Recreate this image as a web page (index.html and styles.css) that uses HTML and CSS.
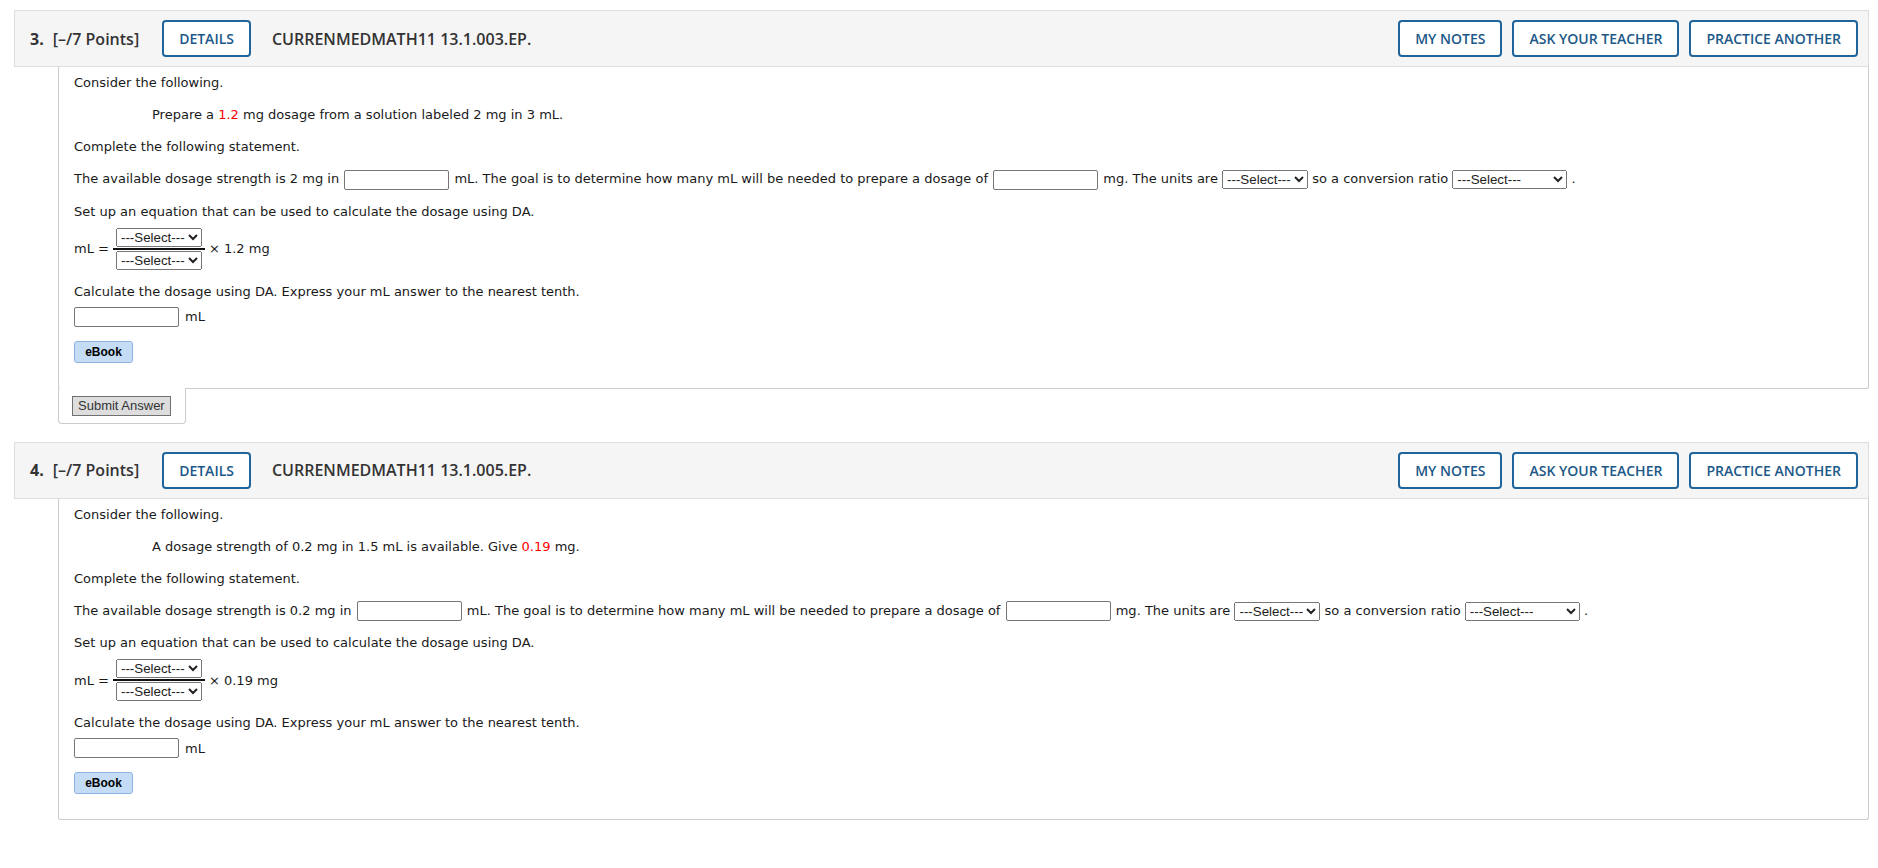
FILE: index.html
```html
<html>
    <head>
        <link rel="stylesheet" href="styles.css">
    </head>
    <body>

    <div class="page">

        <div class="question">
            <div class="q-head">
                <span class="q-num">3.</span>
                <span class="q-points">[&ndash;/7 Points]</span>
                <button class="head-btn details">Details</button>
                <span class="q-title">CURRENMEDMATH11 13.1.003.EP.</span>
                <div class="head-actions">
                    <button class="head-btn">My Notes</button>
                    <button class="head-btn">Ask Your Teacher</button>
                    <button class="head-btn">Practice Another</button>
                </div>
            </div>
            <div class="q-body">
                <p>Consider the following.</p>
                <p class="given">Prepare a <span class="red">1.2</span> mg dosage from a solution labeled 2 mg in 3 mL.</p>
                <p>Complete the following statement.</p>
                <p>The available dosage strength is 2 mg in <input type="text" class="answer"> mL. The goal is to determine how many mL will be needed to prepare a dosage of <input type="text" class="answer"> mg. The units are <select><option>---Select---</option><option>same</option><option>different</option></select> so a conversion ratio <select class="wide"><option>---Select---</option><option>is needed</option><option>is not needed</option></select> .</p>
                <p>Set up an equation that can be used to calculate the dosage using DA.</p>
                <div class="equation">
                    <span>mL =</span>
                    <span class="fraction">
                        <select><option>---Select---</option><option>1.2 mg</option><option>2 mg</option><option>3 mL</option></select>
                        <span class="bar"></span>
                        <select><option>---Select---</option><option>1.2 mg</option><option>2 mg</option><option>3 mL</option></select>
                    </span>
                    <span>&times; 1.2 mg</span>
                </div>
                <p class="calc">Calculate the dosage using DA. Express your mL answer to the nearest tenth.</p>
                <div class="result"><input type="text" class="answer"> mL</div>
                <button class="ebook">eBook</button>
            </div>
            <div class="submit-tab">
                <button class="submit-btn">Submit Answer</button>
            </div>
        </div>

        <div class="question">
            <div class="q-head">
                <span class="q-num">4.</span>
                <span class="q-points">[&ndash;/7 Points]</span>
                <button class="head-btn details">Details</button>
                <span class="q-title">CURRENMEDMATH11 13.1.005.EP.</span>
                <div class="head-actions">
                    <button class="head-btn">My Notes</button>
                    <button class="head-btn">Ask Your Teacher</button>
                    <button class="head-btn">Practice Another</button>
                </div>
            </div>
            <div class="q-body">
                <p>Consider the following.</p>
                <p class="given">A dosage strength of 0.2 mg in 1.5 mL is available. Give <span class="red">0.19</span> mg.</p>
                <p>Complete the following statement.</p>
                <p>The available dosage strength is 0.2 mg in <input type="text" class="answer"> mL. The goal is to determine how many mL will be needed to prepare a dosage of <input type="text" class="answer"> mg. The units are <select><option>---Select---</option><option>same</option><option>different</option></select> so a conversion ratio <select class="wide"><option>---Select---</option><option>is needed</option><option>is not needed</option></select> .</p>
                <p>Set up an equation that can be used to calculate the dosage using DA.</p>
                <div class="equation">
                    <span>mL =</span>
                    <span class="fraction">
                        <select><option>---Select---</option><option>0.19 mg</option><option>0.2 mg</option><option>1.5 mL</option></select>
                        <span class="bar"></span>
                        <select><option>---Select---</option><option>0.19 mg</option><option>0.2 mg</option><option>1.5 mL</option></select>
                    </span>
                    <span>&times; 0.19 mg</span>
                </div>
                <p class="calc">Calculate the dosage using DA. Express your mL answer to the nearest tenth.</p>
                <div class="result"><input type="text" class="answer"> mL</div>
                <button class="ebook">eBook</button>
            </div>
        </div>

    </div>

    </body>
</html>
```

FILE: styles.css
```css
body {
    margin: 0;
    background-color: white;
    color: #1a1a1a;
    font-family: "DejaVu Sans", Verdana, sans-serif;
    font-size: 13px;
}

.page {
    padding: 10px 9px 0 14px;
}

.question {
    margin-bottom: 18px;
}

/* header bar */
.q-head {
    display: flex;
    align-items: center;
    height: 57px;
    box-sizing: border-box;
    padding: 0 10px 0 15px;
    background-color: #f5f5f5;
    border: 1px solid #dddddd;
    font-family: "Open Sans", sans-serif;
    color: #333333;
}
.q-num {
    font-size: 16px;
    font-weight: 700;
    margin-right: 9px;
}
.q-points {
    font-size: 16px;
    font-weight: 600;
    margin-right: 23px;
}
.q-title {
    font-size: 16px;
    font-weight: 600;
    margin-left: 21px;
}
.head-actions {
    margin-left: auto;
    display: flex;
    gap: 10px;
}
.head-btn {
    height: 37px;
    padding: 0 15px;
    border: 2px solid #1f659c;
    border-radius: 4px;
    background-color: white;
    color: #1c5888;
    font-family: "Open Sans", sans-serif;
    font-size: 14px;
    font-weight: 600;
    text-transform: uppercase;
}

/* question body */
.q-body {
    margin-left: 44px;
    padding: 8px 15px 25px 15px;
    border: 1px solid #cccccc;
    border-top: none;
    border-radius: 0 0 3px 3px;
}
.q-body p {
    margin: 0 0 16px 0;
    line-height: 16px;
}
.q-body p.given {
    padding-left: 78px;
}
.q-body p.calc {
    margin-bottom: 7px;
}
.red {
    color: #ff0000;
}

input.answer {
    width: 105px;
    height: 20px;
    box-sizing: border-box;
    margin: -2px 1px;
    vertical-align: middle;
    border: 1px solid #767676;
    border-radius: 2px;
}

select {
    font-family: "Liberation Sans", Arial, sans-serif;
    font-size: 13.33px;
    height: 19px;
    margin: -2px 0;
    vertical-align: middle;
    color: #222222;
}
select.wide {
    width: 115px;
}

.equation {
    display: flex;
    align-items: center;
    gap: 4px;
    margin: -8px 0 14px 0;
}
.fraction {
    display: flex;
    flex-direction: column;
    align-items: center;
}
.fraction select {
    margin: 0 3px;
}
.fraction .bar {
    align-self: stretch;
    height: 0;
    border-top: 2px solid #111111;
    margin: 1px 0;
}

.result {
    display: flex;
    align-items: center;
    gap: 6px;
    margin-bottom: 14px;
}
.result input.answer {
    margin: 0;
}

.ebook {
    display: block;
    width: 59px;
    height: 22px;
    padding: 0;
    background-color: #c4dcf6;
    border: 1px solid #8fb3e0;
    border-radius: 3px;
    font-family: "Liberation Sans", Arial, sans-serif;
    font-size: 12px;
    font-weight: bold;
    color: #000000;
}

/* submit tab under first question */
.submit-tab {
    width: 128px;
    box-sizing: border-box;
    margin: -1px 0 0 44px;
    padding: 8px 13px 7px 13px;
    background-color: white;
    border: 1px solid #cccccc;
    border-top: none;
    border-radius: 0 0 4px 4px;
    position: relative;
}
.submit-btn {
    display: block;
    height: 20px;
    padding: 0 5px;
    background-color: #dddddd;
    border: 1px solid #707070;
    border-radius: 0;
    font-family: "Liberation Sans", Arial, sans-serif;
    font-size: 13px;
    color: #333333;
}
```
